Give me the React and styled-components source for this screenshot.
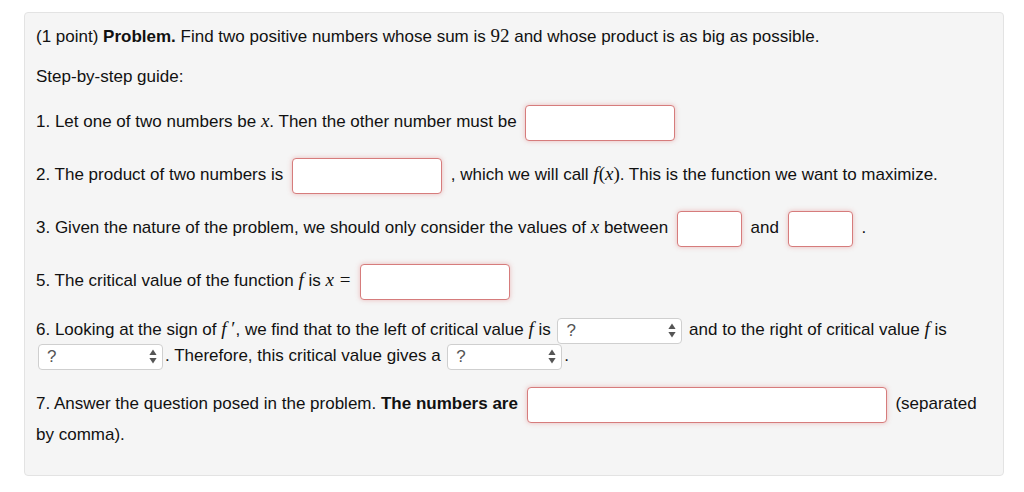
import styled, { createGlobalStyle } from "styled-components";

const GlobalStyle = createGlobalStyle`
  body {
    margin: 0;
    background: #ffffff;
    font-family: "Liberation Sans", Arial, Helvetica, sans-serif;
    color: #111111;
  }
`;

function UpDownArrows() {
  return (
    <svg width="8" height="15" viewBox="0 0 8 15">
      <path d="M4 0.5 L7.6 6 L0.4 6 Z" fill="#555" />
      <path d="M4 14.5 L7.6 9 L0.4 9 Z" fill="#555" />
    </svg>
  );
}

function Dropdown({ width }) {
  return (
    <SelectWrap $width={width}>
      <Select defaultValue="?">
        <option>?</option>
        <option>increasing</option>
        <option>decreasing</option>
      </Select>
      <Arrows>
        <UpDownArrows />
      </Arrows>
    </SelectWrap>
  );
}

function App() {
  return (
    <Page>
      <GlobalStyle />
      <Problem>
        <Para>
          (1 point) <b>Problem.</b> Find two positive numbers whose sum is{" "}
          <MathNum>92</MathNum> and whose product is as big as possible.
        </Para>
        <Para>Step-by-step guide:</Para>
        <Para>
          1. Let one of two numbers be <MathVar>x</MathVar>. Then the other
          number must be <Answer $width={150} />
        </Para>
        <Para>
          2. The product of two numbers is <Answer $width={150} /> , which we
          will call <MathVar>f</MathVar>
          <MathNum>(</MathNum>
          <MathVar>x</MathVar>
          <MathNum>)</MathNum>. This is the function we want to maximize.
        </Para>
        <Para>
          3. Given the nature of the problem, we should only consider the
          values of <MathVar>x</MathVar> between <Answer $width={65} /> and{" "}
          <Answer $width={65} /> .
        </Para>
        <Para>
          5. The critical value of the function <MathVar>f</MathVar> is{" "}
          <MathVar>x</MathVar>
          <MathRel>=</MathRel>
          <Answer $width={150} />
        </Para>
        <Para>
          6. Looking at the sign of <MathVar>f</MathVar>
          <MathNum> ′</MathNum>, we find that to the left of critical value{" "}
          <MathVar>f</MathVar> is <Dropdown width={125} /> and to the right of
          critical value <MathVar>f</MathVar> is <Dropdown width={125} />.
          Therefore, this critical value gives a <Dropdown width={115} />.
        </Para>
        <Para>
          7. Answer the question posed in the problem.{" "}
          <b>The numbers are</b> <Answer $width={360} /> (separated by comma).
        </Para>
      </Problem>
    </Page>
  );
}

export default App;

const Page = styled.div`
  padding: 12px 20px 16px 24px;
`;

const Problem = styled.div`
  width: 980px;
  box-sizing: border-box;
  background: #f5f5f5;
  border: 1px solid #e3e3e3;
  border-radius: 4px;
  padding: 11px 11px 12px;
  font-size: 17px;
`;

const Para = styled.p`
  margin: 0 0 17px;
  line-height: 23px;

  b {
    font-weight: 700;
  }
`;

const MathVar = styled.i`
  font-family: "Liberation Serif", "Times New Roman", serif;
  font-style: italic;
  font-size: 19px;
`;

const MathNum = styled.span`
  font-family: "Liberation Serif", "Times New Roman", serif;
  font-size: 19px;
`;

const MathRel = styled(MathNum)`
  margin: 0 5px 0 6px;
`;

const Answer = styled.input.attrs({ type: "text" })`
  box-sizing: border-box;
  width: ${(p) => p.$width}px;
  height: 36px;
  margin: 0 4px;
  padding: 4px 8px;
  vertical-align: middle;
  background: #ffffff;
  border: 1px solid #d67c7c;
  border-radius: 4px;
  box-shadow: 0 0 5px rgba(214, 80, 80, 0.35);
  font: inherit;
  outline: none;
`;

const SelectWrap = styled.span`
  position: relative;
  display: inline-block;
  width: ${(p) => p.$width}px;
  height: 26px;
  margin: 0 2px;
  vertical-align: middle;
`;

const Select = styled.select`
  appearance: none;
  box-sizing: border-box;
  width: 100%;
  height: 100%;
  padding: 0 8px;
  background: #ffffff;
  border: 1px solid #cfcfcf;
  border-radius: 4px;
  color: #555555;
  font-family: "Liberation Sans", Arial, sans-serif;
  font-size: 17px;
`;

const Arrows = styled.span`
  position: absolute;
  top: 5px;
  right: 6px;
  display: flex;
  pointer-events: none;
`;
